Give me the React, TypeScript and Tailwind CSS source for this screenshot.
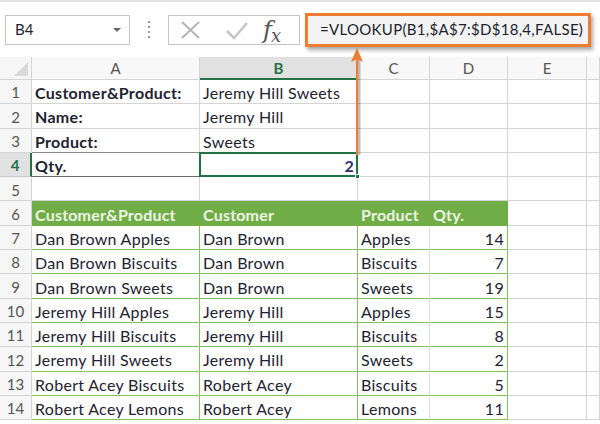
import React from "react";

const W = [168, 158, 72, 78, 79, 13];
const ROWH = "h-[24.3px]";

type Cell = { t?: string; cls?: string; right?: boolean };

const top: Cell[][] = [
  [{ t: "Customer&Product:", cls: "font-bold" }, { t: "Jeremy Hill Sweets" }],
  [{ t: "Name:", cls: "font-bold" }, { t: "Jeremy Hill" }],
  [{ t: "Product:", cls: "font-bold" }, { t: "Sweets" }],
  [{ t: "Qty.", cls: "font-bold" }, { t: "2", right: true, cls: "font-bold text-[#2b3170]" }],
  [],
];

const data: [string, string, string, string][] = [
  ["Dan Brown Apples", "Dan Brown", "Apples", "14"],
  ["Dan Brown Biscuits", "Dan Brown", "Biscuits", "7"],
  ["Dan Brown Sweets", "Dan Brown", "Sweets", "19"],
  ["Jeremy Hill Apples", "Jeremy Hill", "Apples", "15"],
  ["Jeremy Hill Biscuits", "Jeremy Hill", "Biscuits", "8"],
  ["Jeremy Hill Sweets", "Jeremy Hill", "Sweets", "2"],
  ["Robert Acey Biscuits", "Robert Acey", "Biscuits", "5"],
  ["Robert Acey Lemons", "Robert Acey", "Lemons", "11"],
];

function RowHead({ n, sel }: { n: number; sel?: boolean }) {
  return (
    <div
      className={`w-[32px] shrink-0 ${ROWH} flex items-center justify-center pt-[2px] text-[15px] border-b border-r ${
        sel
          ? "bg-[#e1e1e1] text-[#217346] font-bold border-r-[#217346] border-r-2 border-b-[#c6c6c6]"
          : "bg-[#f6f6f6] text-[#555] border-[#d4d4d4]"
      }`}
    >
      {n}
    </div>
  );
}

export default function App() {
  return (
    <div className="w-[600px] h-[424px] bg-white relative overflow-hidden font-['Lato',sans-serif] text-[#1e2230]">
      <div className="h-[2px] bg-[#e2e2e2]" />
      {/* toolbar */}
      <div className="h-[55px] flex items-center pl-[5px]">
        <div className="w-[125px] h-[30px] border border-[#c6c6c6] bg-white flex items-center justify-between pl-[9px] pr-[8px] text-[15px]">
          <span>B4</span>
          <span className="w-0 h-0 border-l-[4px] border-r-[4px] border-t-[4px] border-l-transparent border-r-transparent border-t-[#666]" />
        </div>
        <div className="w-[38px] flex flex-col items-center gap-[3px]">
          <span className="w-[2px] h-[2px] bg-[#999]" />
          <span className="w-[2px] h-[2px] bg-[#999]" />
          <span className="w-[2px] h-[2px] bg-[#999]" />
          <span className="w-[2px] h-[2px] bg-[#999]" />
        </div>
        <div className="w-[132px] h-[30px] border border-[#c6c6c6] bg-white flex items-center">
          <svg width="44" height="28" viewBox="0 0 44 28">
            <path d="M13 6 L30 22 M30 6 L13 22" stroke="#b5b5b5" strokeWidth="2" fill="none" />
          </svg>
          <svg width="46" height="28" viewBox="0 0 46 28">
            <path d="M14 15 L21 22 L34 7" stroke="#c4c4c4" strokeWidth="2.5" fill="none" />
          </svg>
          <span className="ml-[4px] font-['DejaVu_Serif',serif] italic text-[24px] text-[#555] leading-none flex items-end">
            f<span className="text-[18px] translate-y-[3px] -ml-[1px]">x</span>
          </span>
        </div>
        <div className="ml-[5px] w-[286px] h-[34px] border-[3px] border-[#ed7d31] bg-[#f3f3f3] shadow-[2px_3px_4px_rgba(0,0,0,0.35)] flex items-center pl-[12px] text-[15px] tracking-[0.3px] text-[#1b1f2e]">
          =VLOOKUP(B1,$A$7:$D$18,4,FALSE)
        </div>
      </div>
      {/* column headers */}
      <div className="flex h-[23px]">
        <div className="w-[32px] shrink-0 bg-[#f6f6f6] border-r border-b border-[#d4d4d4] relative">
          <svg className="absolute right-[3px] bottom-[3px]" width="14" height="14" viewBox="0 0 14 14">
            <path d="M14 0 L14 14 L0 14 Z" fill="#d9d9d9" />
          </svg>
        </div>
        {["A", "B", "C", "D", "E", ""].map((c, i) => (
          <div
            key={i}
            style={{ width: W[i] }}
            className={`shrink-0 flex items-center justify-center pt-[1px] text-[15px] border-r ${
              c === "B"
                ? "bg-[#e1e1e1] text-[#217346] font-bold border-b-2 border-b-[#217346] border-r-[#c6c6c6]"
                : "bg-[#f8f8f8] text-[#555] border-b border-[#d4d4d4]"
            }`}
          >
            {c}
          </div>
        ))}
      </div>
      {/* rows 1-5 */}
      {top.map((row, r) => (
        <div key={r} className="flex">
          <RowHead n={r + 1} sel={r === 3} />
          {W.map((w, i) => {
            const cell = row[i];
            const a4 = r === 3 && i === 0;
            const above = r === 2 && i === 0;
            return (
              <div
                key={i}
                style={{ width: w }}
                className={`shrink-0 ${ROWH} border-r border-b ${
                  a4 ? "border-b-[#6b6b6b] border-r-[#d4d4d4]" : above ? "border-b-[#8a8a8a] border-r-[#d4d4d4]" : "border-[#d4d4d4]"
                } flex items-center px-[3px] pt-[3px] text-[16px] tracking-[0.3px] whitespace-nowrap overflow-visible ${
                  cell?.right ? "justify-end" : ""
                } ${cell?.cls ?? ""} ${r === 3 && i === 1 ? "relative" : ""}`}
              >
                {cell?.t}
                {r === 3 && i === 1 && (
                  <div className="absolute -left-[1px] -top-[1px] right-[-1px] bottom-[-1px] border-2 border-[#217346]">
                    <span className="absolute -right-[4px] -bottom-[4px] w-[5px] h-[5px] bg-[#217346] border border-white" />
                  </div>
                )}
              </div>
            );
          })}
        </div>
      ))}
      {/* row 6 header */}
      <div className="flex">
        <RowHead n={6} />
        <div className="flex bg-[#70ad47] text-[#eef6e6] font-bold text-[16px] tracking-[0.2px]">
          {["Customer&Product", "Customer", "Product", "Qty."].map((t, i) => (
            <div key={i} style={{ width: W[i] }} className={`shrink-0 ${ROWH} flex items-center px-[3px] pt-[3px] whitespace-nowrap`}>
              {t}
            </div>
          ))}
        </div>
        {[W[4], W[5]].map((w, i) => (
          <div key={i} style={{ width: w }} className={`shrink-0 ${ROWH} border-r border-b border-[#d4d4d4]`} />
        ))}
      </div>
      {data.map((d, r) => (
        <div key={r} className="flex">
          <RowHead n={r + 7} />
          {d.map((t, i) => (
            <div
              key={i}
              style={{ width: W[i] }}
              className={`shrink-0 ${ROWH} flex items-center px-[3px] pt-[3px] text-[16px] tracking-[0.3px] whitespace-nowrap border-b border-b-[#86bf5e] ${
                i === 0 ? "border-r border-r-[#86bf5e]" : ""
              } ${i === 1 ? "border-r border-r-[#86bf5e]" : ""} ${i === 2 ? "border-r border-r-[#e0e0e0]" : ""} ${
                i === 3 ? "justify-end border-r border-r-[#86bf5e]" : ""
              }`}
            >
              {t}
            </div>
          ))}
          {[W[4], W[5]].map((w, i) => (
            <div key={i} style={{ width: w }} className={`shrink-0 ${ROWH} border-r border-b border-[#d4d4d4]`} />
          ))}
        </div>
      ))}
      {/* orange arrow */}
      <svg className="absolute left-[346px] top-[45px]" width="24" height="112" viewBox="0 0 24 112">
        <path d="M13 14 L13 110" stroke="rgba(0,0,0,0.25)" strokeWidth="3" fill="none" />
        <path d="M11 6 L11 110" stroke="#ed7d31" strokeWidth="2" fill="none" />
        <path d="M11 3 L17 17 L11 14 L5 17 Z" fill="#ed7d31" />
      </svg>
    </div>
  );
}
